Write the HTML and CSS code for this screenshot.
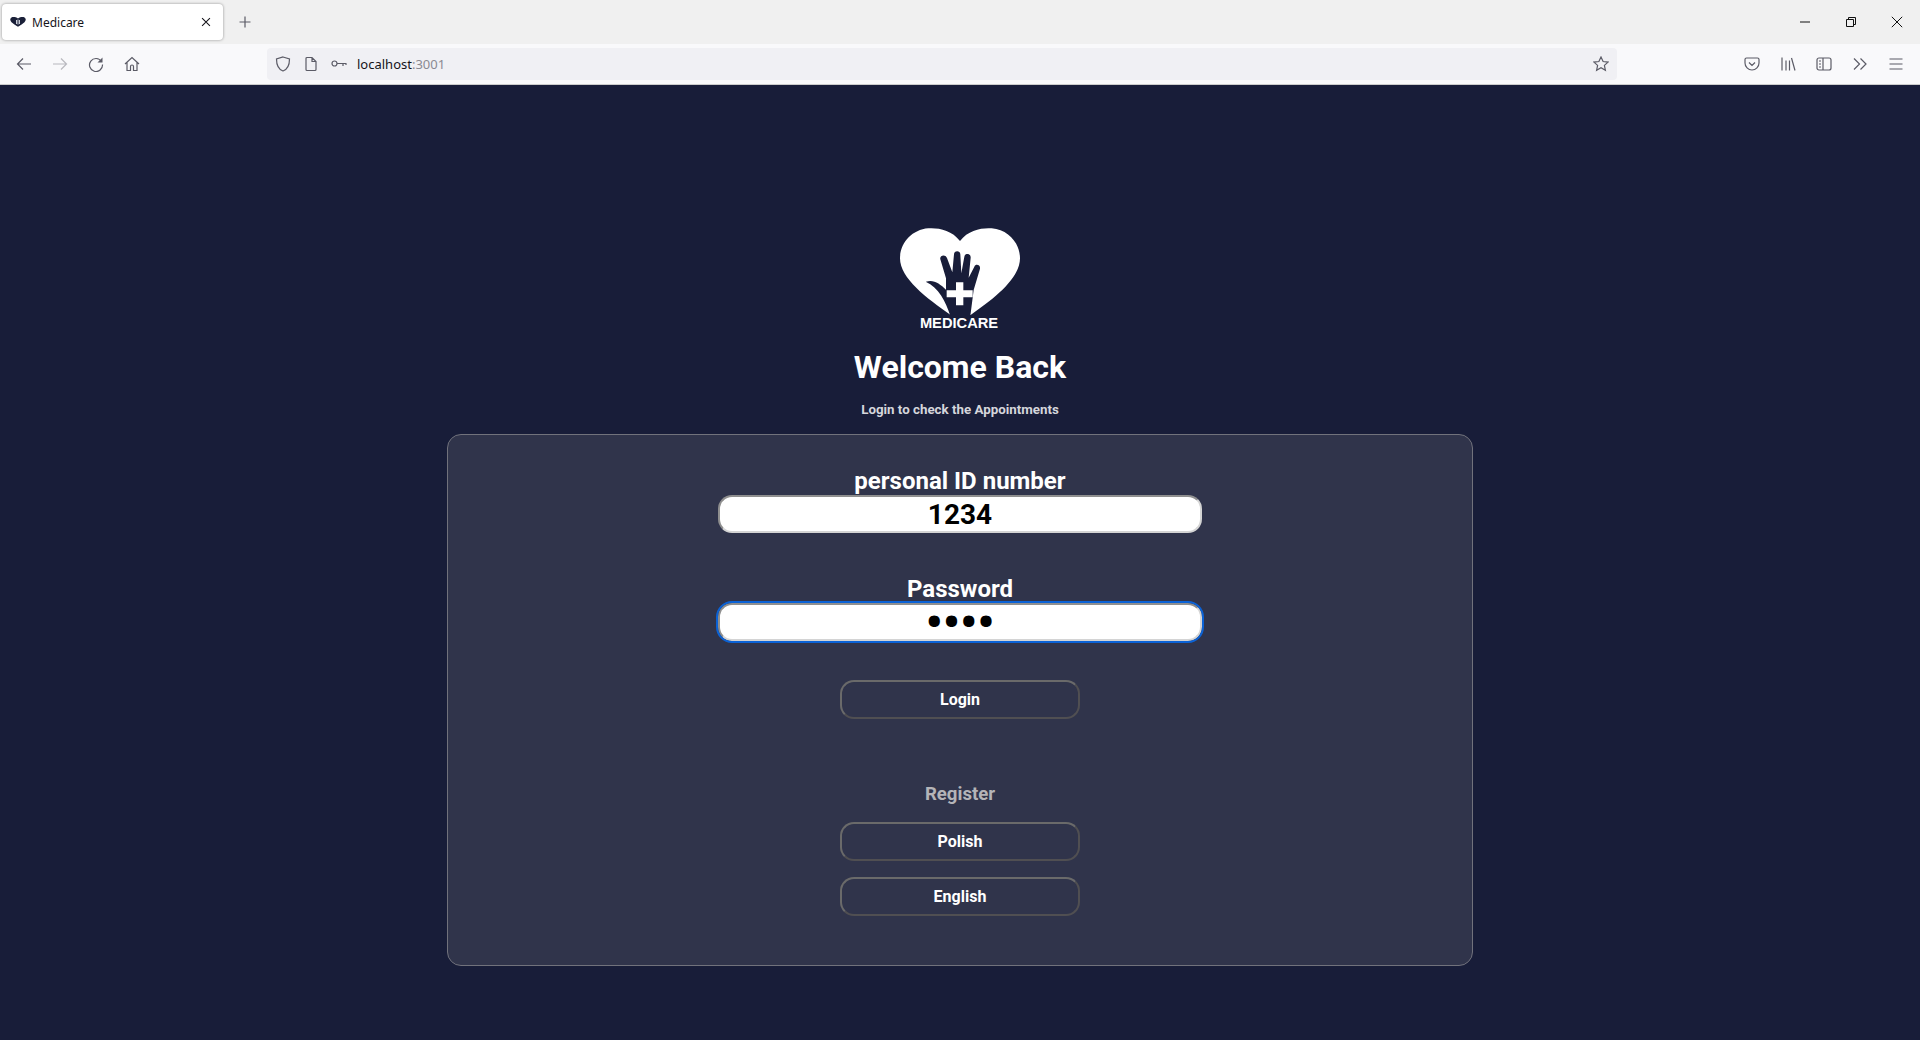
FILE: index.html
```html
<!DOCTYPE html>
<html lang="en">

<head>
    <meta charset="UTF-8" />
    <meta name="viewport" content="width=device-width, initial-scale=1.0" />
    <title>Medicare</title>
    <link rel="stylesheet" href="styles.css">
</head>

<body>
    <!-- Browser chrome -->
    <div class="tabbar">
        <div class="tab">
            <svg class="favicon" viewBox="0 0 16 10">
                <path d="M8 1.500C6 0 3 -.2 1.500.4 0 1.200-.3 3.500 1.500 5.200 3.500 7 6 8.500 8 9.800 10 8.500 12.500 7 14.500 5.200 16.300 3.500 16 1.200 14.500.4 13-.2 10 0 8 1.500z" fill="#1a2038" />
                <path d="M6.500 3v4M8 2.500V7.500M9.500 3v4" stroke="#c9ccd6" stroke-width="1" />
            </svg>
            <span class="tab-title">Medicare</span>
            <svg class="icon tab-close" viewBox="0 0 16 16"><path d="M3.500 3.500l9 9M12.500 3.500l-9 9" /></svg>
        </div>
        <svg class="icon new-tab" viewBox="0 0 16 16"><path d="M8 2.500v11M2.500 8h11" /></svg>
        <div class="window-controls">
            <svg class="win-icon" viewBox="0 0 12 12"><path d="M1 6h10" /></svg>
            <svg class="win-icon" viewBox="0 0 12 12"><path d="M1.500 3.500h7v7h-7zM3.500 3.500v-2h7v7h-2" /></svg>
            <svg class="win-icon" viewBox="0 0 12 12"><path d="M.8.800l10.400 10.400M11.200.800L.8 11.200" /></svg>
        </div>
    </div>

    <div class="navbar">
        <div class="nav-buttons">
            <svg class="icon" viewBox="0 0 16 16"><path d="M15 8H1.500M7 2.500L1.500 8 7 13.500" /></svg>
            <svg class="icon disabled" viewBox="0 0 16 16"><path d="M1 8h13.500M9 2.500L14.500 8 9 13.500" /></svg>
            <svg class="icon" viewBox="0 0 16 16"><path d="M13.500 5.500A6.500 6.500 0 1 0 14.500 8.500" /><path class="solid" d="M14.500 1.500v5h-5z" /></svg>
            <svg class="icon" viewBox="0 0 16 16"><path d="M1 8l7-6.500L15 8M3 6.500V14.500h3.500V10.500a1.500 1.500 0 0 1 3 0v4H13V6.500" /></svg>
        </div>
        <div class="urlbar">
            <svg class="icon" viewBox="0 0 16 16"><path d="M8 1l6.500 2c0 5-1 10-6.500 12C2.500 13 1.500 8 1.500 3z" /></svg>
            <svg class="icon" viewBox="0 0 16 16"><path d="M3 2.500a1 1 0 0 1 1-1h5l4 4v8a1 1 0 0 1-1 1H4a1 1 0 0 1-1-1zM9 1.500v4h4" /></svg>
            <svg class="icon" viewBox="0 0 16 16"><circle cx="3.500" cy="7.500" r="2.500" /><path d="M6 7.500h9.500M12 7.500v2.500M15 7.500v1.500" /></svg>
            <span class="url">localhost<span class="url-port">:3001</span></span>
            <svg class="icon star" viewBox="0 0 16 16"><path d="M8 1l2.100 4.500 4.900.6-3.600 3.300 1 4.900L8 11.800l-4.400 2.500 1-4.900L1 6.100l4.900-.6z" /></svg>
        </div>
        <div class="nav-tools">
            <svg class="icon" viewBox="0 0 16 16"><path d="M2.500 2h11a1.500 1.500 0 0 1 1.500 1.500V7a7 7 0 0 1-14 0V3.500A1.500 1.500 0 0 1 2.500 2zM5 6.500L8 9.500l3-3" /></svg>
            <svg class="icon" viewBox="0 0 16 16"><path d="M2 1.500v13M6 4.500v10M9.500 4.500v10M11.500 2l3.500 12.500" /></svg>
            <svg class="icon" viewBox="0 0 16 16"><rect x="1" y="2" width="14" height="12" rx="2" /><path d="M7 2v12M3 5h2M3 8h2M3 11h2" /></svg>
            <svg class="icon" viewBox="0 0 16 16"><path d="M2 2.500L7.500 8 2 13.500M8.500 2.500L14 8l-5.500 5.500" /></svg>
            <svg class="icon" viewBox="0 0 16 16"><path d="M1.500 3h13M1.500 8h13M1.500 13h13" /></svg>
        </div>
    </div>

    <!-- Login page -->
    <main class="page">
        <svg class="logo" viewBox="0 0 600 375" role="img" aria-label="Medicare logo">
            <path class="logo-heart" d="M300 78C275 45 235 38 205 40 155 44 120 85 120 130c0 60 80 120 152 170h60c72-50 148-110 148-170 0-45-35-86-85-90-30-2-70 5-95 38z" />
            <path class="logo-hand" d="M198 200c22-8 42 6 60 24v-34l-17-57c-3-12 15-17 20-4l16 43 5-54c0-12 19-12 19 0l3 57 9-50c2-12 20-9 19 3l-6 60 17-33c4-10 19-5 17 6l-19 64-10 78h-60c-14-45-35-85-74-103z" />
            <path class="logo-cross" d="M288 202h22v24h28v21h-28v24h-22v-24h-28v-21h28z" />
            <text class="logo-name" x="297" y="338" text-anchor="middle">MEDICARE</text>
        </svg>
        <h1>Welcome Back</h1>
        <p class="subtitle">Login to check the Appointments</p>

        <form class="card">
            <div class="form-group">
                <label for="personalId">personal ID number</label>
                <input type="text" id="personalId" value="1234">
            </div>
            <div class="form-group">
                <label for="password">Password</label>
                <input class="focused" type="password" id="password" value="1234">
            </div>
            <button class="btn login-btn" type="button">Login</button>
            <div class="register-title">Register</div>
            <button class="btn" type="button">Polish</button>
            <button class="btn" type="button">English</button>
        </form>
    </main>
</body>

</html>
```

FILE: styles.css
```css
html,
body {
    height: 100%;
}

body {
    margin: 0;
    display: flex;
    flex-direction: column;
    overflow: hidden;
    font-family: Roboto, sans-serif;
    background: #181d39;
}

/* Browser chrome */
.tabbar {
    height: 44px;
    flex: none;
    display: flex;
    align-items: center;
    background: #f0f0f0;
}

.tab {
    width: 221px;
    height: 36px;
    box-sizing: border-box;
    margin-left: 2px;
    padding: 0 10px 0 8px;
    display: flex;
    align-items: center;
    background: #fff;
    border-radius: 4px;
    box-shadow: 0 0 3px rgba(0, 0, 0, 0.4);
}

.favicon {
    width: 16px;
    height: 10px;
    flex: none;
}

.tab-title {
    flex-grow: 1;
    margin-left: 6px;
    font-family: "Noto Sans", sans-serif;
    font-size: 12px;
    color: #15141a;
}

.icon {
    width: 16px;
    height: 16px;
    flex: none;
    fill: none;
    stroke: #5b5b66;
    stroke-width: 1.2;
}

.icon .solid {
    fill: #5b5b66;
    stroke: none;
}

.icon.disabled {
    opacity: 0.4;
}

.tab-close {
    width: 14px;
    height: 14px;
    stroke: #15141a;
}

.new-tab {
    margin-left: 14px;
}

.window-controls {
    margin-left: auto;
    margin-right: 17px;
    display: flex;
    gap: 34px;
}

.win-icon {
    width: 12px;
    height: 12px;
    fill: none;
    stroke: #111;
    stroke-width: 1;
}

.navbar {
    height: 41px;
    flex: none;
    box-sizing: border-box;
    display: flex;
    align-items: center;
    background: #f9f9fb;
    border-bottom: 1px solid #ccc;
}

.nav-buttons {
    width: 267px;
    flex: none;
    box-sizing: border-box;
    padding-left: 16px;
    display: flex;
    gap: 20px;
}

.urlbar {
    width: 1350px;
    height: 32px;
    flex: none;
    box-sizing: border-box;
    padding: 0 8px;
    display: flex;
    align-items: center;
    gap: 12px;
    background: #f0f0f4;
    border-radius: 4px;
}

.url {
    flex-grow: 1;
    margin-left: -2px;
    font-family: "Noto Sans", sans-serif;
    font-size: 13px;
    color: #15141a;
}

.url-port {
    color: #8a8a92;
}

.nav-tools {
    margin-left: 127px;
    display: flex;
    gap: 20px;
}

/* Login page */
.page {
    flex-grow: 1;
    display: flex;
    flex-direction: column;
    align-items: center;
    padding-top: 130px;
    color: #fff;
}

.logo {
    width: 200px;
    height: 125px;
    flex: none;
}

.logo-heart {
    fill: #fff;
}

.logo-hand {
    fill: #181d39;
}

.logo-cross {
    fill: #fff;
}

.logo-name {
    fill: #fff;
    font-family: "Liberation Sans", Arial, sans-serif;
    font-size: 44px;
    font-weight: bold;
}

h1 {
    margin: 9px 0 0;
    font-size: 32px;
    line-height: 37px;
    font-weight: bold;
}

.subtitle {
    margin: 16px 0 0;
    font-size: 13.330px;
    line-height: 16px;
    font-weight: bold;
    color: #d5d6dc;
}

.card {
    width: 1026px;
    height: 532px;
    box-sizing: border-box;
    margin-top: 16px;
    padding-top: 32px;
    display: flex;
    flex-direction: column;
    align-items: center;
    background: #30344b;
    border: 1px solid #71727c;
    border-radius: 14px;
}

.form-group {
    display: flex;
    flex-direction: column;
    align-items: center;
    margin-bottom: 26px;
}

.form-group + .form-group {
    margin-top: 16px;
}

.form-group label {
    font-size: 24px;
    line-height: 28px;
    font-weight: bold;
}

.form-group input {
    width: 484px;
    height: 38px;
    box-sizing: border-box;
    padding: 0 8px;
    background: #fff;
    color: #000;
    font-family: Roboto, sans-serif;
    font-size: 28px;
    font-weight: bold;
    text-align: center;
    border: 2px solid;
    border-color: #8f8f8f #d4d4d4 #d4d4d4 #8f8f8f;
    border-radius: 14px;
    outline: none;
}

.form-group input.focused {
    font-size: 48px;
    outline: 2px solid #0b62d6;
    outline-offset: 0;
}

.btn {
    width: 240px;
    height: 39px;
    flex: none;
    margin-bottom: 16px;
    background: transparent;
    color: #fff;
    font-family: Roboto, sans-serif;
    font-size: 16px;
    font-weight: bold;
    border: 2px solid;
    border-color: #6a6a6a #504f52 #504f52 #6a6a6a;
    border-radius: 14px;
    cursor: pointer;
}

.login-btn {
    margin-top: 13px;
    margin-bottom: 0;
}

.register-title {
    margin-top: 64px;
    margin-bottom: 17px;
    font-size: 18.600px;
    line-height: 22px;
    font-weight: bold;
    color: #b4b4b8;
}
```
